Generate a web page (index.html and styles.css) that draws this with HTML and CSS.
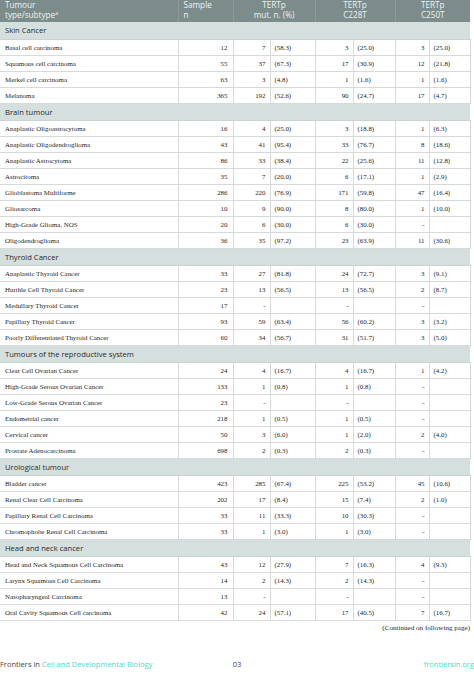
FILE: index.html
```html
<!DOCTYPE html>
<html>
<head>
<meta charset="utf-8">
<link rel="stylesheet" href="styles.css">
</head>
<body>
<div class="page">
<table class="tbl">
<colgroup>
<col class="c1"><col class="c2"><col class="c3"><col class="c4"><col class="c5"><col class="c6"><col class="c7"><col class="c8">
</colgroup>
<thead>
<tr class="hdr">
<th class="hl">Tumour<br>type/subtype<sup>a</sup></th>
<th class="hl hs">Sample<br>n</th>
<th class="hc hs" colspan="2">TERTp<br>mut. n. (%)</th>
<th class="hc hs" colspan="2">TERTp<br>C228T</th>
<th class="hc hs" colspan="2">TERTp<br>C250T</th>
</tr>
</thead>
<tbody>
<tr class="sec"><td colspan="8">Skin Cancer</td></tr>
<tr><td class="t">Basal cell carcinoma</td><td class="s">12</td><td class="n">7</td><td class="p">(58.3)</td><td class="n">3</td><td class="p">(25.0)</td><td class="n">3</td><td class="p">(25.0)</td></tr>
<tr><td class="t">Squamous cell carcinoma</td><td class="s">55</td><td class="n">37</td><td class="p">(67.3)</td><td class="n">17</td><td class="p">(30.9)</td><td class="n">12</td><td class="p">(21.8)</td></tr>
<tr><td class="t">Merkel cell carcinoma</td><td class="s">63</td><td class="n">3</td><td class="p">(4.8)</td><td class="n">1</td><td class="p">(1.6)</td><td class="n">1</td><td class="p">(1.6)</td></tr>
<tr><td class="t">Melanoma</td><td class="s">365</td><td class="n">192</td><td class="p">(52.6)</td><td class="n">90</td><td class="p">(24.7)</td><td class="n">17</td><td class="p">(4.7)</td></tr>
<tr class="sec"><td colspan="8">Brain tumour</td></tr>
<tr><td class="t">Anaplastic Oligoastrocytoma</td><td class="s">16</td><td class="n">4</td><td class="p">(25.0)</td><td class="n">3</td><td class="p">(18.8)</td><td class="n">1</td><td class="p">(6.3)</td></tr>
<tr><td class="t">Anaplastic Oligodendroglioma</td><td class="s">43</td><td class="n">41</td><td class="p">(95.4)</td><td class="n">33</td><td class="p">(76.7)</td><td class="n">8</td><td class="p">(18.6)</td></tr>
<tr><td class="t">Anaplastic Astrocytoma</td><td class="s">86</td><td class="n">33</td><td class="p">(38.4)</td><td class="n">22</td><td class="p">(25.6)</td><td class="n">11</td><td class="p">(12.8)</td></tr>
<tr><td class="t">Astrocitoma</td><td class="s">35</td><td class="n">7</td><td class="p">(20.0)</td><td class="n">6</td><td class="p">(17.1)</td><td class="n">1</td><td class="p">(2.9)</td></tr>
<tr><td class="t">Glioblastoma Multiforme</td><td class="s">286</td><td class="n">220</td><td class="p">(76.9)</td><td class="n">171</td><td class="p">(59.8)</td><td class="n">47</td><td class="p">(16.4)</td></tr>
<tr><td class="t">Gliosarcoma</td><td class="s">10</td><td class="n">9</td><td class="p">(90.0)</td><td class="n">8</td><td class="p">(80.0)</td><td class="n">1</td><td class="p">(10.0)</td></tr>
<tr><td class="t">High-Grade Glioma, NOS</td><td class="s">20</td><td class="n">6</td><td class="p">(30.0)</td><td class="n">6</td><td class="p">(30.0)</td><td class="n">-</td><td class="p"></td></tr>
<tr><td class="t">Oligodendroglioma</td><td class="s">36</td><td class="n">35</td><td class="p">(97.2)</td><td class="n">23</td><td class="p">(63.9)</td><td class="n">11</td><td class="p">(30.6)</td></tr>
<tr class="sec"><td colspan="8">Thyroid Cancer</td></tr>
<tr><td class="t">Anaplastic Thyroid Cancer</td><td class="s">33</td><td class="n">27</td><td class="p">(81.8)</td><td class="n">24</td><td class="p">(72.7)</td><td class="n">3</td><td class="p">(9.1)</td></tr>
<tr><td class="t">Hurthle Cell Thyroid Cancer</td><td class="s">23</td><td class="n">13</td><td class="p">(56.5)</td><td class="n">13</td><td class="p">(56.5)</td><td class="n">2</td><td class="p">(8.7)</td></tr>
<tr><td class="t">Medullary Thyroid Cancer</td><td class="s">17</td><td class="n">-</td><td class="p"></td><td class="n">-</td><td class="p"></td><td class="n">-</td><td class="p"></td></tr>
<tr><td class="t">Papillary Thyroid Cancer</td><td class="s">93</td><td class="n">59</td><td class="p">(63.4)</td><td class="n">56</td><td class="p">(60.2)</td><td class="n">3</td><td class="p">(3.2)</td></tr>
<tr><td class="t">Poorly Differentiated Thyroid Cancer</td><td class="s">60</td><td class="n">34</td><td class="p">(56.7)</td><td class="n">31</td><td class="p">(51.7)</td><td class="n">3</td><td class="p">(5.0)</td></tr>
<tr class="sec"><td colspan="8">Tumours of the reproductive system</td></tr>
<tr><td class="t">Clear Cell Ovarian Cancer</td><td class="s">24</td><td class="n">4</td><td class="p">(16.7)</td><td class="n">4</td><td class="p">(16.7)</td><td class="n">1</td><td class="p">(4.2)</td></tr>
<tr><td class="t">High-Grade Serous Ovarian Cancer</td><td class="s">133</td><td class="n">1</td><td class="p">(0.8)</td><td class="n">1</td><td class="p">(0.8)</td><td class="n">-</td><td class="p"></td></tr>
<tr><td class="t">Low-Grade Serous Ovarian Cancer</td><td class="s">23</td><td class="n">-</td><td class="p"></td><td class="n">-</td><td class="p"></td><td class="n">-</td><td class="p"></td></tr>
<tr><td class="t">Endometrial cancer</td><td class="s">218</td><td class="n">1</td><td class="p">(0.5)</td><td class="n">1</td><td class="p">(0.5)</td><td class="n">-</td><td class="p"></td></tr>
<tr><td class="t">Cervical cancer</td><td class="s">50</td><td class="n">3</td><td class="p">(6.0)</td><td class="n">1</td><td class="p">(2.0)</td><td class="n">2</td><td class="p">(4.0)</td></tr>
<tr><td class="t">Prostate Adenocarcinoma</td><td class="s">698</td><td class="n">2</td><td class="p">(0.3)</td><td class="n">2</td><td class="p">(0.3)</td><td class="n">-</td><td class="p"></td></tr>
<tr class="sec"><td colspan="8">Urological tumour</td></tr>
<tr><td class="t">Bladder cancer</td><td class="s">423</td><td class="n">285</td><td class="p">(67.4)</td><td class="n">225</td><td class="p">(53.2)</td><td class="n">45</td><td class="p">(10.6)</td></tr>
<tr><td class="t">Renal Clear Cell Carcinoma</td><td class="s">202</td><td class="n">17</td><td class="p">(8.4)</td><td class="n">15</td><td class="p">(7.4)</td><td class="n">2</td><td class="p">(1.0)</td></tr>
<tr><td class="t">Papillary Renal Cell Carcinoma</td><td class="s">33</td><td class="n">11</td><td class="p">(33.3)</td><td class="n">10</td><td class="p">(30.3)</td><td class="n">-</td><td class="p"></td></tr>
<tr><td class="t">Chromophobe Renal Cell Carcinoma</td><td class="s">33</td><td class="n">1</td><td class="p">(3.0)</td><td class="n">1</td><td class="p">(3.0)</td><td class="n">-</td><td class="p"></td></tr>
<tr class="sec"><td colspan="8">Head and neck cancer</td></tr>
<tr><td class="t">Head and Neck Squamous Cell Carcinoma</td><td class="s">43</td><td class="n">12</td><td class="p">(27.9)</td><td class="n">7</td><td class="p">(16.3)</td><td class="n">4</td><td class="p">(9.3)</td></tr>
<tr><td class="t">Larynx Squamous Cell Carcinoma</td><td class="s">14</td><td class="n">2</td><td class="p">(14.3)</td><td class="n">2</td><td class="p">(14.3)</td><td class="n">-</td><td class="p"></td></tr>
<tr><td class="t">Nasopharyngeal Carcinoma</td><td class="s">13</td><td class="n">-</td><td class="p"></td><td class="n">-</td><td class="p"></td><td class="n">-</td><td class="p"></td></tr>
<tr><td class="t">Oral Cavity Squamous Cell carcinoma</td><td class="s">42</td><td class="n">24</td><td class="p">(57.1)</td><td class="n">17</td><td class="p">(40.5)</td><td class="n">7</td><td class="p">(16.7)</td></tr>
</tbody>
</table>
<div class="cont">(Continued on following page)</div>
<div class="footer">
<div class="fl">Frontiers in <span class="cy">Cell and Developmental Biology</span></div>
<div class="fc">03</div>
<div class="fr cy">frontiersin.org</div>
</div>
</div>
</body>
</html>
```
FILE: styles.css
```css
html, body {
  margin: 0;
  padding: 0;
  background: #ffffff;
}
.page {
  width: 474px;
  height: 676px;
  display: flex;
  flex-direction: column;
}
.tbl {
  width: 470px;
  table-layout: fixed;
  border-collapse: collapse;
  font-family: "Liberation Serif", serif;
  font-size: 6.9px;
  color: #262626;
}
.c1 { width: 178px; }
.c2 { width: 55px; }
.c3 { width: 37px; }
.c4 { width: 45px; }
.c5 { width: 38px; }
.c6 { width: 42px; }
.c7 { width: 34px; }
.c8 { width: 41px; }
.hdr th {
  background: #7b8c8b;
  color: #eef3f3;
  font-family: "Open Sans", sans-serif;
  font-weight: normal;
  font-size: 8.2px;
  line-height: 9.5px;
  height: 22px;
  padding: 0 5px 1px 5px;
  vertical-align: top;
  box-sizing: border-box;
}
.hdr th.hl { text-align: left; }
.hdr th.hc { text-align: center; }
.hdr th.hs { border-left: 1px solid #8a9a99; }
.hdr sup {
  font-size: 5px;
  line-height: 0;
  vertical-align: 3px;
}
.sec td {
  background: #d5dfde;
  font-family: "Open Sans", sans-serif;
  font-size: 7.6px;
  color: #2a2a2a;
  height: 17px;
  padding: 0 5px;
  border-bottom: 1px solid #c9d3d2;
  box-sizing: border-box;
}
tbody tr td {
  height: 16px;
  padding: 0 5px;
  box-sizing: border-box;
  border-bottom: 1px solid #d6dada;
  vertical-align: middle;
  white-space: nowrap;
}
td.t { text-align: left; }
td.s {
  text-align: right;
  border-left: 1px solid #d6dada;
}
td.n {
  text-align: right;
  border-left: 1px solid #d6dada;
  padding-right: 4px;
}
td.p {
  text-align: left;
  border-left: 1px solid #d6dada;
  padding-left: 4px;
}
tbody tr td:last-child { border-right: 1px solid #d6dada; }
tbody tr.sec td:last-child { border-right: none; }
.cont {
  width: 470px;
  text-align: right;
  font-family: "Liberation Serif", serif;
  font-size: 7.1px;
  color: #262626;
  margin-top: 3px;
}
.footer {
  margin-top: auto;
  margin-bottom: 7px;
  display: grid;
  grid-template-columns: 1fr auto 1fr;
  align-items: center;
  font-family: "Open Sans", sans-serif;
  font-size: 7.5px;
  color: #444444;
}
.fc { text-align: center; }
.fr { text-align: right; }
.cy { color: #3fdccb; }
```
